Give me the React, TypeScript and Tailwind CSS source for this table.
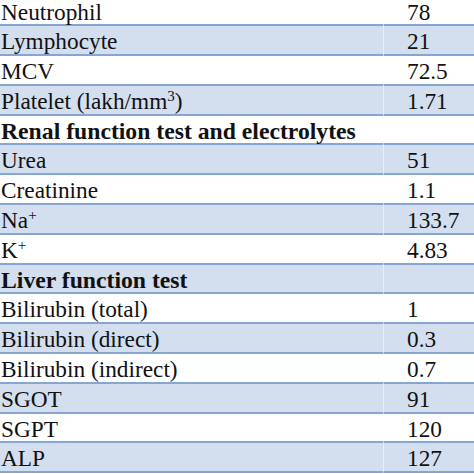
import React from "react";

type Row = { label: React.ReactNode; value?: string; header?: boolean };

const rows: Row[] = [
  { label: "Neutrophil", value: "78" },
  { label: "Lymphocyte", value: "21" },
  { label: "MCV", value: "72.5" },
  { label: <>Platelet (lakh/mm<sup className="text-[15px] -top-[8px]">3</sup>)</>, value: "1.71" },
  { label: "Renal function test and electrolytes", header: true },
  { label: "Urea", value: "51" },
  { label: "Creatinine", value: "1.1" },
  { label: <>Na<sup className="text-[15px] -top-[8px]">+</sup></>, value: "133.7" },
  { label: <>K<sup className="text-[15px] -top-[8px]">+</sup></>, value: "4.83" },
  { label: "Liver function test", header: true },
  { label: "Bilirubin (total)", value: "1" },
  { label: "Bilirubin (direct)", value: "0.3" },
  { label: "Bilirubin (indirect)", value: "0.7" },
  { label: "SGOT", value: "91" },
  { label: "SGPT", value: "120" },
  { label: "ALP", value: "127" },
];

export default function App() {
  return (
    <div className="w-[474px] h-[474px] overflow-hidden bg-white text-[#111] font-[Liberation_Serif,Times_New_Roman,serif] text-[23.3px]">
      <div className="-mt-[3.5px] flex flex-col">
        {rows.map((r, i) => {
          const blue = i % 2 === 1;
          return (
            <div
              key={i}
              className={`h-[29.8px] shrink-0 border-b-2 border-[#86A5D1] grid grid-cols-[383px_1fr] ${blue ? "bg-[#D3DFEE]" : "bg-white"}`}
            >
              {r.header ? (
                <>
                  <div className="leading-[30px] whitespace-nowrap font-bold text-[23.7px] pl-px">{r.label}</div>
                  <div className="border-l border-white/50" />
                </>
              ) : (
                <>
                  <div className="leading-[30px] whitespace-nowrap pl-px">{r.label}</div>
                  <div className="leading-[30px] whitespace-nowrap pl-[23px] border-l border-white/50">{r.value}</div>
                </>
              )}
            </div>
          );
        })}
      </div>
    </div>
  );
}
